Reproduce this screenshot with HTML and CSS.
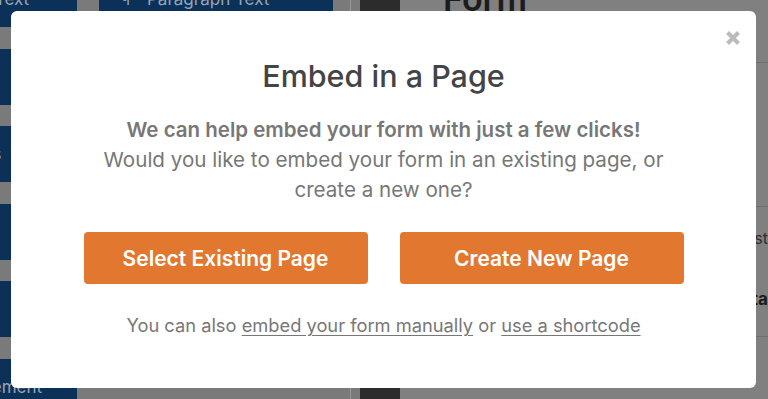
FILE: index.html
```html
<!DOCTYPE html>
<html lang="en">
<head>
    <meta charset="UTF-8">
    <meta name="viewport" content="width=device-width, initial-scale=1.0">
    <title>Embed in a Page</title>
    <link rel="stylesheet" href="styles.css">
</head>
<body>
    <div class="builder">
        <div class="fields-panel">
            <div class="field-col col-a">
                <div class="field-btn">Single Line Text</div>
                <div class="field-btn">Name</div>
                <div class="field-btn">Checkboxes</div>
                <div class="field-btn">Email</div>
                <div class="field-btn">Likert Scale</div>
                <div class="field-btn">GDPR Agreement</div>
            </div>
            <div class="field-col col-b">
                <div class="field-btn"><span class="field-icon">¶</span>Paragraph Text</div>
                <div class="field-btn">Multiple Choice</div>
                <div class="field-btn">Numbers</div>
                <div class="field-btn">Number Slider</div>
                <div class="field-btn">Rating</div>
            </div>
            <div class="scroll-line"></div>
        </div>
        <div class="panel-edge"></div>
        <div class="preview">
            <div class="preview-head">
                <h1>Form</h1>
            </div>
            <div class="preview-field"></div>
            <div class="preview-field tall">
                <p class="field-desc">Pick the option that suits you best</p>
                <p class="field-label">Extra Data</p>
            </div>
        </div>
    </div>

    <div class="modal">
        <svg class="modal-close" viewBox="0 0 16 16" width="16" height="16">
            <path d="M2.5 2.5 L13.5 13.5 M13.5 2.5 L2.5 13.5" stroke="#bbb" stroke-width="4" fill="none"/>
        </svg>
        <h2>Embed in a Page</h2>
        <p class="lead">We can help embed your form with just a few clicks!</p>
        <p class="sub">Would you like to embed your form in an existing page, or<br>create a new one?</p>
        <div class="actions">
            <button class="btn">Select Existing Page</button>
            <button class="btn">Create New Page</button>
        </div>
        <p class="note">You can also <a href="#">embed your form manually</a> or <a href="#">use a shortcode</a></p>
    </div>
</body>
</html>
```

FILE: styles.css
```css
body {
    margin: 0;
    width: 768px;
    height: 399px;
    overflow: hidden;
    position: relative;
    font-family: Inter, "Noto Sans", sans-serif;
}

.builder {
    display: flex;
    height: 399px;
    overflow: hidden;
}

.fields-panel {
    display: flex;
    align-items: flex-start;
    gap: 22px;
    width: 360px;
    flex: none;
    background-color: #7a7a7a;
    overflow: hidden;
}

.field-col {
    display: flex;
    flex-direction: column;
    gap: 21.5px;
    margin-top: -29px;
    flex: none;
}

.col-a {
    width: 175px;
    margin-left: -98px;
}

.col-b {
    width: 234px;
}

.field-btn {
    display: flex;
    align-items: center;
    height: 56px;
    padding-left: 22px;
    background-color: #0b3158;
    color: #9aa5b3;
    font-size: 17px;
    white-space: nowrap;
    overflow: hidden;
}

.col-a .field-btn {
    padding-left: 0;
}

.field-icon {
    width: 26px;
    font-size: 15px;
}

.scroll-line {
    width: 1px;
    height: 399px;
    margin-left: -5px;
    background-color: #989898;
}

.panel-edge {
    width: 40px;
    flex: none;
    background-color: #2c2c2c;
}

.preview {
    flex: 1;
    background-color: #808080;
    padding-left: 43px;
    color: #222;
    overflow: hidden;
}

.preview-head {
    margin-top: -21px;
    height: 84px;
    box-sizing: border-box;
    border-bottom: 1px solid #707070;
}

.preview-head h1 {
    margin: 0;
    font-size: 34px;
    line-height: 40px;
    font-weight: 600;
    color: #1c1c1c;
}

.preview-field {
    height: 144px;
    box-sizing: border-box;
    border-bottom: 1px solid #707070;
}

.preview-field.tall {
    height: 130px;
    padding-top: 20px;
}

.field-desc {
    margin: 0;
    font-size: 16px;
    line-height: 22px;
    text-align: right;
    white-space: nowrap;
    color: #2e2e2e;
}

.field-label {
    margin: 40px 0 0;
    font-size: 17px;
    font-weight: 700;
    text-align: right;
    white-space: nowrap;
    color: #1a1a1a;
}

.modal {
    position: absolute;
    top: 11px;
    left: 11px;
    width: 745px;
    height: 377px;
    box-sizing: border-box;
    padding-top: 47px;
    background-color: #fff;
    border-radius: 6px;
    text-align: center;
}

.modal-close {
    position: absolute;
    top: 19px;
    right: 15px;
    width: 16px;
    height: 16px;
}

.modal h2 {
    margin: 0;
    font-size: 30.5px;
    line-height: 36px;
    font-weight: 500;
    color: #444;
}

.lead {
    margin: 21px 0 0;
    font-size: 20.5px;
    line-height: 30px;
    font-weight: 600;
    color: #777;
}

.sub {
    margin: 0;
    font-size: 20.6px;
    line-height: 30px;
    color: #777;
}

.actions {
    display: flex;
    justify-content: center;
    gap: 32px;
    margin-top: 27px;
}

.btn {
    width: 284px;
    height: 52px;
    padding: 0;
    background-color: #e27730;
    color: #fff;
    border: none;
    border-radius: 4px;
    font-family: Inter, "Noto Sans", sans-serif;
    font-size: 21px;
    font-weight: 600;
    cursor: pointer;
}

.note {
    margin: 29px 0 0;
    font-size: 18.3px;
    line-height: 24px;
    color: #777;
}

.note a {
    color: #777;
    text-decoration: underline;
    text-underline-offset: 3px;
}
```
